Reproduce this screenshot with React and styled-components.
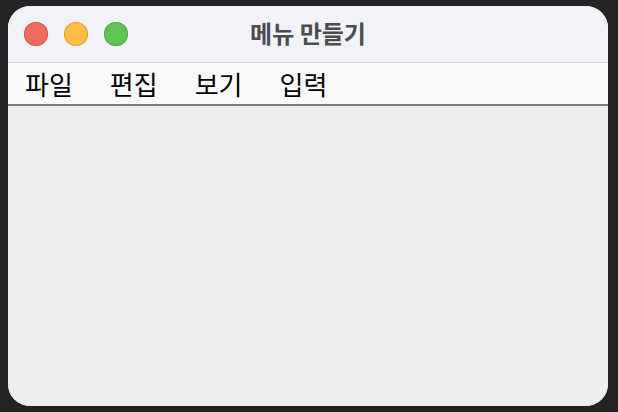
import React from "react";
import styled, { createGlobalStyle } from "styled-components";

const Global = createGlobalStyle`
  html, body { margin: 0; padding: 0; background: #232323; }
  body { font-family: "Noto Sans CJK KR", "Noto Sans", sans-serif; }
`;

const Page = styled.div`
  width: 618px;
  height: 412px;
  padding: 6px 0 0 8px;
  box-sizing: border-box;
`;

const Window = styled.div`
  width: 600px;
  height: 400px;
  border-radius: 22px;
  overflow: hidden;
  background: #eeeeee;
  display: flex;
  flex-direction: column;
`;

const TitleBar = styled.div`
  height: 56px;
  flex: none;
  background: #f2f3f8;
  border-bottom: 1px solid #d6d6da;
  display: flex;
  align-items: center;
  position: relative;
  padding-left: 16px;
  gap: 16px;
`;

const Light = styled.span`
  width: 24px;
  height: 24px;
  border-radius: 50%;
  background: ${(p) => p.$c};
  box-shadow: inset 0 0 0 1px ${(p) => p.$b};
`;

const Title = styled.div`
  position: absolute;
  left: 0;
  right: 0;
  top: 0;
  bottom: 0;
  display: flex;
  align-items: center;
  justify-content: center;
  font-size: 24px;
  font-weight: 700;
  color: #4c4c4c;
  padding-bottom: 3px;
  pointer-events: none;
`;

const MenuBar = styled.div`
  height: 41px;
  flex: none;
  background: #fafafa;
  border-bottom: 2px solid #7e7e7e;
  display: flex;
  align-items: center;
  padding-left: 17px;
  gap: 37px;
`;

const MenuItem = styled.span`
  font-size: 26px;
  color: #000;
  line-height: 1;
`;

const Content = styled.div`
  flex: 1;
  background: #eeeeee;
`;

export default function App() {
  return (
    <Page>
      <Global />
      <Window>
        <TitleBar>
          <Light $c="#f26b5e" $b="#e0574b" />
          <Light $c="#fbbe46" $b="#e3a43a" />
          <Light $c="#5fc452" $b="#4fae43" />
          <Title>메뉴 만들기</Title>
        </TitleBar>
        <MenuBar>
          <MenuItem>파일</MenuItem>
          <MenuItem>편집</MenuItem>
          <MenuItem>보기</MenuItem>
          <MenuItem>입력</MenuItem>
        </MenuBar>
        <Content />
      </Window>
    </Page>
  );
}
